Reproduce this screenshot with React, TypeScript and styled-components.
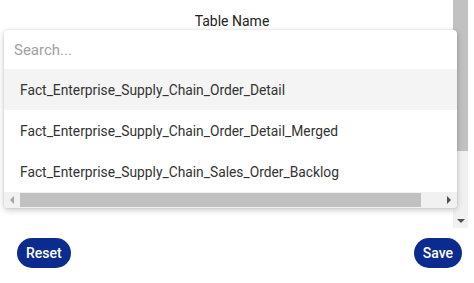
import React, { useState } from "react";
import styled, { createGlobalStyle } from "styled-components";

const GlobalStyle = createGlobalStyle`
    html, body {
        margin: 0;
        padding: 0;
        background: #ffffff;
        font-family: Roboto, "Liberation Sans", Arial, sans-serif;
    }
    *, *::before, *::after {
        box-sizing: border-box;
    }
`;

const Root = styled.div`
    width: 474px;
    height: 283px;
    display: flex;
    flex-flow: column;
    overflow: hidden;
`;

const ScrollArea = styled.div`
    position: relative;
    display: flex;
    flex-flow: row;
    width: 468px;
    height: 228px;
`;

const Content = styled.div`
    flex-grow: 1;
    display: flex;
    flex-flow: column;
    align-items: center;
`;

const HeaderLabel = styled.div`
    margin-top: 12px;
    margin-left: 11px;
    font-size: 14px;
    line-height: 18px;
    color: #222222;
`;

const VScrollbar = styled.div`
    width: 15px;
    height: 100%;
    display: flex;
    flex-flow: column;
    background: #f1f1f1;
`;

const VThumb = styled.div`
    height: 151px;
    background: #c1c1c1;
`;

const VTrack = styled.div`
    flex-grow: 1;
    display: flex;
    align-items: flex-end;
    justify-content: center;
    padding-bottom: 5px;
`;

const ArrowDown = styled.div`
    width: 0;
    height: 0;
    border-left: 4px solid transparent;
    border-right: 4px solid transparent;
    border-top: 4px solid #505050;
`;

const Dropdown = styled.div`
    position: absolute;
    top: 30px;
    left: 4px;
    width: 453px;
    background: #ffffff;
    border-radius: 4px;
    box-shadow: 0 2px 6px rgba(0, 0, 0, 0.22), 0 0 2px rgba(0, 0, 0, 0.12);
    display: flex;
    flex-flow: column;
    overflow: hidden;
`;

const SearchInput = styled.input`
    height: 39px;
    border: none;
    outline: none;
    padding: 0 10px;
    font-family: Roboto, "Liberation Sans", Arial, sans-serif;
    font-size: 15px;
    color: #333333;
    background: transparent;

    &::placeholder {
        color: #a0a0a0;
    }
`;

const OptionList = styled.div`
    display: flex;
    flex-flow: column;
`;

const Option = styled.div<{ $active: boolean }>`
    height: 41px;
    display: flex;
    align-items: center;
    padding-left: 16px;
    padding-top: 1px;
    font-size: 13.8px;
    color: #333333;
    white-space: nowrap;
    background: ${(p) => (p.$active ? "#f4f4f4" : "#ffffff")};
    cursor: pointer;
`;

const HScrollbar = styled.div`
    height: 16px;
    display: flex;
    flex-flow: row;
    align-items: center;
    background: #f1f1f1;
`;

const HArrowBox = styled.div`
    width: 16px;
    height: 100%;
    display: flex;
    align-items: center;
    justify-content: center;
`;

const ArrowLeft = styled.div`
    width: 0;
    height: 0;
    border-top: 4px solid transparent;
    border-bottom: 4px solid transparent;
    border-right: 4px solid #a3a3a3;
`;

const ArrowRight = styled.div`
    width: 0;
    height: 0;
    border-top: 4px solid transparent;
    border-bottom: 4px solid transparent;
    border-left: 4px solid #505050;
`;

const HTrack = styled.div`
    flex-grow: 1;
    height: 100%;
    display: flex;
    align-items: stretch;
    padding: 1px 20px 1px 0;
`;

const HThumb = styled.div`
    flex-grow: 1;
    background: #c1c1c1;
`;

const Footer = styled.div`
    display: flex;
    flex-flow: row;
    justify-content: space-between;
    padding: 10px 12px 0 17px;
`;

const PillButton = styled.button`
    height: 30px;
    padding: 0 9px;
    border: none;
    border-radius: 15px;
    background: #0b2c8e;
    color: #ffffff;
    font-family: Roboto, "Liberation Sans", Arial, sans-serif;
    font-size: 14px;
    font-weight: 500;
    cursor: pointer;
`;

const tables = [
    "Fact_Enterprise_Supply_Chain_Order_Detail",
    "Fact_Enterprise_Supply_Chain_Order_Detail_Merged",
    "Fact_Enterprise_Supply_Chain_Sales_Order_Backlog",
];

const App: React.FC = () => {
    const [query, setQuery] = useState("");
    const [active, setActive] = useState(0);

    const visible = tables.filter((t) => t.toLowerCase().includes(query.toLowerCase()));

    return (
        <Root>
            <GlobalStyle />
            <ScrollArea>
                <Content>
                    <HeaderLabel>Table Name</HeaderLabel>
                </Content>
                <VScrollbar>
                    <VThumb />
                    <VTrack>
                        <ArrowDown />
                    </VTrack>
                </VScrollbar>
                <Dropdown>
                    <SearchInput
                        placeholder="Search..."
                        value={query}
                        onChange={(e) => setQuery(e.target.value)}
                    />
                    <OptionList>
                        {visible.map((name, i) => (
                            <Option key={name} $active={i === active} onMouseEnter={() => setActive(i)}>
                                {name}
                            </Option>
                        ))}
                    </OptionList>
                    <HScrollbar>
                        <HArrowBox>
                            <ArrowLeft />
                        </HArrowBox>
                        <HTrack>
                            <HThumb />
                        </HTrack>
                        <HArrowBox>
                            <ArrowRight />
                        </HArrowBox>
                    </HScrollbar>
                </Dropdown>
            </ScrollArea>
            <Footer>
                <PillButton>Reset</PillButton>
                <PillButton>Save</PillButton>
            </Footer>
        </Root>
    );
};

export default App;
